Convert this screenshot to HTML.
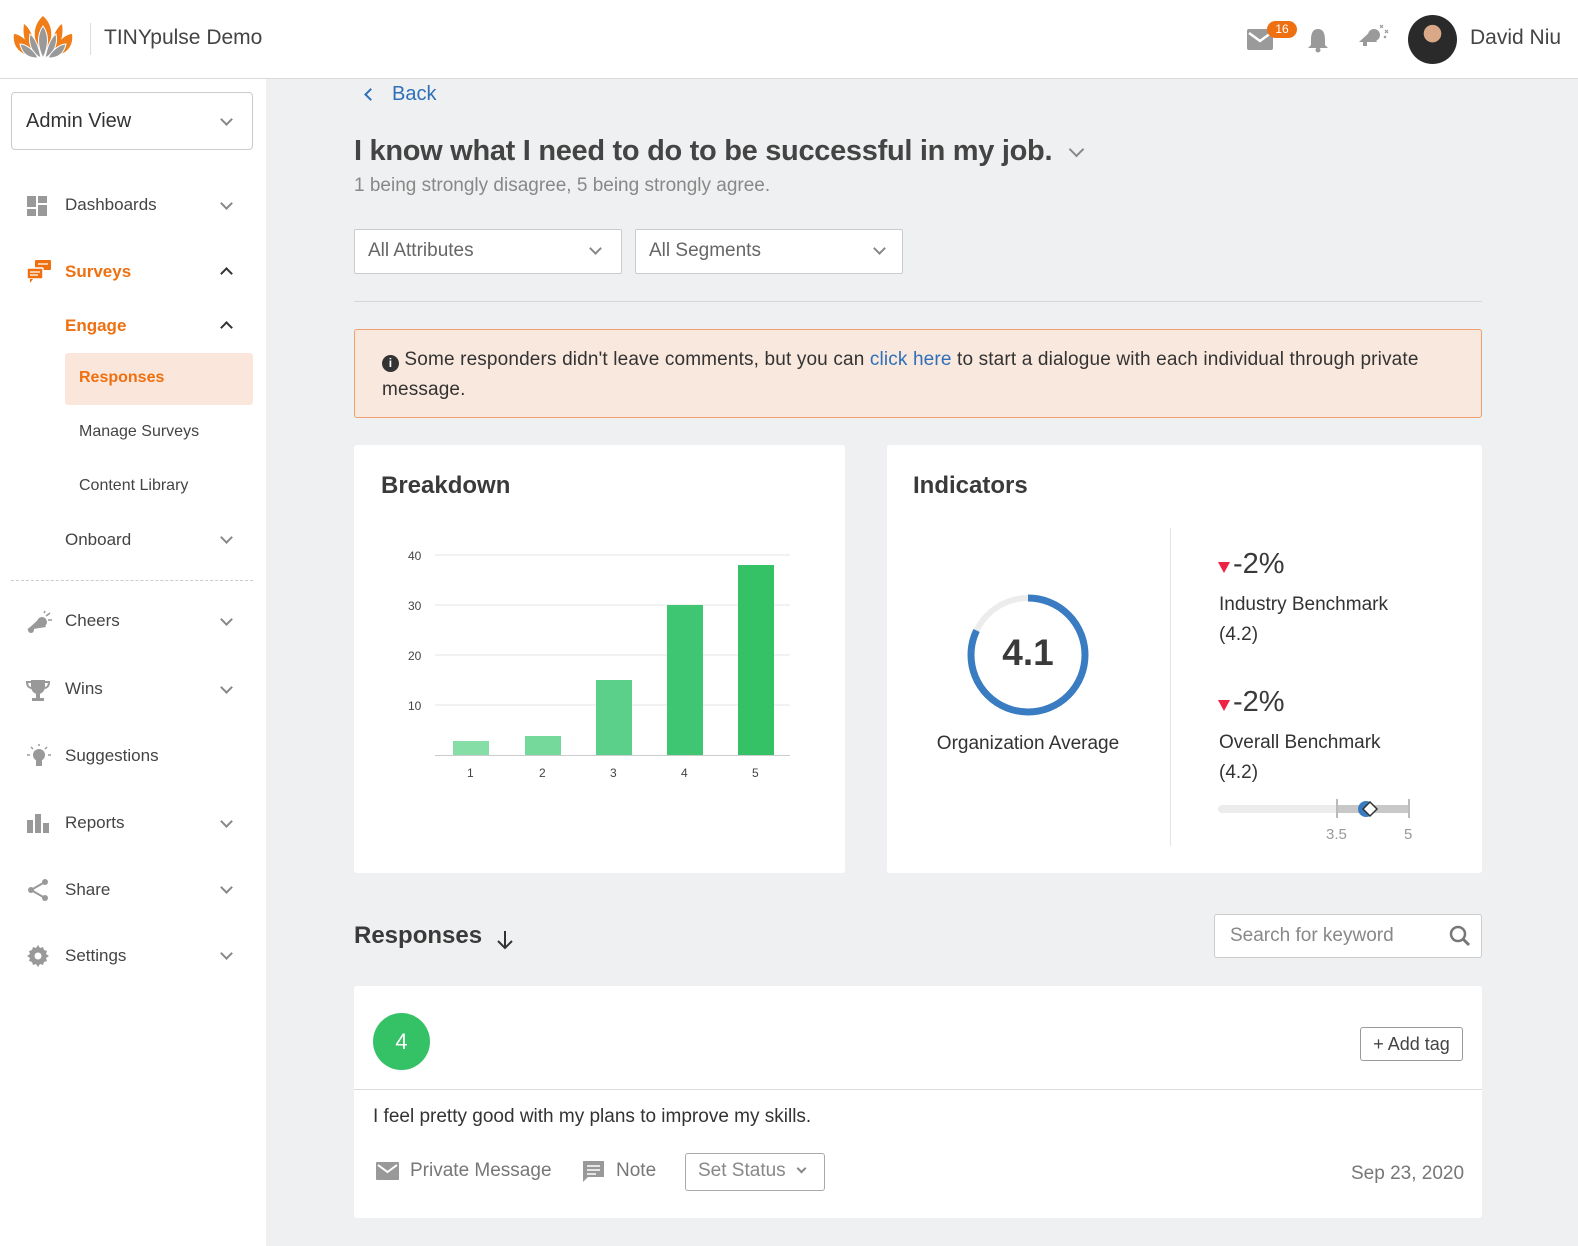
<!DOCTYPE html>
<html><head><meta charset="utf-8"><style>
*{box-sizing:border-box;margin:0;padding:0}
body{width:1578px;height:1246px;overflow:hidden;background:#eff0f1;font-family:"Liberation Sans",sans-serif;color:#3f3f3f;position:relative}
.a{position:absolute}
.hdr{left:0;top:0;width:1578px;height:79px;background:#fff;border-bottom:1px solid #d9d9d9}
.side{left:0;top:79px;width:266px;height:1167px;background:#fff}
.nav{position:absolute;left:65px;font-size:17px;color:#444}
.chev{position:absolute;width:9px;height:9px;border-right:2px solid #888;border-bottom:2px solid #888;transform:rotate(45deg)}
.chev.up{transform:rotate(-135deg);border-color:#333}
.card{background:#fff;border-radius:3px;position:absolute}
.ic{position:absolute;left:26px}
.sel{position:absolute;background:#fff;border:1px solid #ccc;border-radius:2px;font-size:19px;color:#666;padding:10px 13px}
</style></head><body>
<div class="a hdr">
 <svg class="a" style="left:10px;top:14px" width="66" height="46" viewBox="0 0 66 46">
  <path d="M33 2 C22 12 22 26 33 42 C44 26 44 12 33 2Z" fill="#f07d18"/>
  <path d="M4 20 C10 20 20 28 26 42 C12 42 2 34 4 20Z" fill="#f07d18"/>
  <path d="M62 20 C56 20 46 28 40 42 C54 42 64 34 62 20Z" fill="#f07d18"/>
  <path d="M14 10 C20 14 24 24 28 42 C16 36 12 22 14 10Z" fill="#f07d18"/>
  <path d="M52 10 C46 14 42 24 38 42 C50 36 54 22 52 10Z" fill="#f07d18"/>
  <path d="M33 12 C27 20 27 32 33 44 C39 32 39 20 33 12Z" fill="#999" stroke="#fff" stroke-width="1"/>
  <path d="M20 20 C26 24 29 34 31 44 C22 40 18 30 20 20Z" fill="#999" stroke="#fff" stroke-width="1"/>
  <path d="M46 20 C40 24 37 34 35 44 C44 40 48 30 46 20Z" fill="#999" stroke="#fff" stroke-width="1"/>
  <path d="M10 30 C16 30 24 36 28 44 C18 44 12 40 10 30Z" fill="#999" stroke="#fff" stroke-width="1"/>
  <path d="M56 30 C50 30 42 36 38 44 C48 44 54 40 56 30Z" fill="#999" stroke="#fff" stroke-width="1"/>
 </svg>
 <div class="a" style="left:90px;top:23px;width:1px;height:32px;background:#ddd"></div>
 <div class="a" style="left:104px;top:26px;font-size:21px;color:#444">TINYpulse Demo</div>
 <svg class="a" style="left:1247px;top:29px" width="28" height="22" viewBox="0 0 28 22"><rect x="0" y="0" width="26" height="21" rx="2" fill="#9a9a9a"/><path d="M2 4 L13 12 L24 4" stroke="#fff" stroke-width="2.5" fill="none"/></svg>
 <div class="a" style="left:1267px;top:21px;width:30px;height:17px;border-radius:9px;background:#ee7010;color:#fff;font-size:12px;text-align:center;line-height:17px">16</div>
 <svg class="a" style="left:1307px;top:27px" width="22" height="26" viewBox="0 0 22 26"><path d="M11 2 C5 2 4 8 4 13 L4 18 L1 21 L21 21 L18 18 L18 13 C18 8 17 2 11 2Z" fill="#9a9a9a"/><circle cx="11" cy="23" r="2.5" fill="#9a9a9a"/></svg>
 <svg class="a" style="left:1357px;top:22px" width="34" height="26" viewBox="0 0 34 26"><path d="M2 20 L14 9 L20 20 Z" fill="#9a9a9a"/><circle cx="17" cy="13" r="6" fill="#9a9a9a"/><rect x="6" y="19" width="4" height="5" fill="#9a9a9a"/><path d="M23 3l3 3M26 3l-3 3M28 8l3 3M31 8l-3 3M27 14l2 2M29 14l-2 2" stroke="#9a9a9a" stroke-width="1.2"/></svg>
 <div class="a" style="left:1408px;top:15px;width:49px;height:49px;border-radius:50%;background:radial-gradient(circle at 50% 38%,#d9a987 0 22%,#2a2a2a 23% 100%)"></div>
 <div class="a" style="left:1470px;top:26px;font-size:21px;color:#444">David Niu</div>
</div>
<div class="a side">
 <div class="a" style="left:11px;top:13px;width:242px;height:58px;border:1px solid #ccc;border-radius:4px"></div>
 <div class="a" style="left:26px;top:31px;font-size:20px;color:#333">Admin View</div>
 <div class="chev" style="left:222px;top:36px"></div>
</div>
<svg class="ic" style="top:195px" width="22" height="22"><rect x="1" y="1" width="9" height="11" fill="#999"/><rect x="12" y="1" width="9" height="7" fill="#999"/><rect x="1" y="14" width="9" height="7" fill="#999"/><rect x="12" y="10" width="9" height="11" fill="#999"/></svg>
<div class="nav" style="top:195px">Dashboards</div><div class="chev" style="left:222px;top:199px"></div>
<svg class="ic" style="top:259px" width="26" height="25"><rect x="9" y="1" width="16" height="10" rx="1" fill="#ee7010"/><rect x="1" y="9" width="16" height="11" rx="1" fill="#ee7010" stroke="#fff" stroke-width="1.5"/><path d="M4 20v4l3-4z" fill="#ee7010"/><path d="M4 13h10M4 16h8M12 5h10" stroke="#fff" stroke-width="1.3"/></svg>
<div class="nav" style="top:262px;color:#ee7010;font-weight:bold">Surveys</div><div class="chev up" style="left:222px;top:269px"></div>
<div class="nav" style="top:316px;color:#ee7010;font-weight:bold">Engage</div><div class="chev up" style="left:222px;top:323px"></div>
<div class="a" style="left:65px;top:353px;width:188px;height:52px;background:#fbe6db;border-radius:3px"></div>
<div class="nav" style="left:79px;top:369px;color:#ee7010;font-weight:bold;font-size:16px">Responses</div>
<div class="nav" style="left:79px;top:423px;font-size:16px">Manage Surveys</div>
<div class="nav" style="left:79px;top:477px;font-size:16px">Content Library</div>
<div class="nav" style="top:530px">Onboard</div><div class="chev" style="left:222px;top:533px"></div>
<div class="a" style="left:11px;top:580px;width:242px;border-top:1px dashed #ccc"></div>
<svg class="ic" style="top:610px" width="26" height="24"><path d="M1 20 L14 8 L20 17 Z" fill="#999"/><circle cx="16" cy="12" r="5" fill="#999"/><circle cx="5" cy="20" r="3" fill="#999"/><path d="M20 6l4-3M22 10l4 0M18 3l1-2" stroke="#999" stroke-width="1.5"/></svg>
<div class="nav" style="top:611px">Cheers</div><div class="chev" style="left:222px;top:615px"></div>
<svg class="ic" style="top:678px" width="24" height="24"><path d="M5 2h14v6c0 5-3 8-7 8s-7-3-7-8z" fill="#999"/><path d="M5 4H1c0 4 2 6 5 6M19 4h4c0 4-2 6-5 6" stroke="#999" stroke-width="2" fill="none"/><rect x="10" y="15" width="4" height="5" fill="#999"/><rect x="6" y="20" width="12" height="3" fill="#999"/></svg>
<div class="nav" style="top:679px">Wins</div><div class="chev" style="left:222px;top:683px"></div>
<svg class="ic" style="top:744px" width="26" height="26"><circle cx="13" cy="11" r="6" fill="#999"/><rect x="10" y="15" width="6" height="7" fill="#999"/><path d="M1 11h3M22 11h3M5 3l2 2M21 3l-2 2M13 0v2" stroke="#999" stroke-width="1.5"/></svg>
<div class="nav" style="top:746px">Suggestions</div>
<svg class="ic" style="top:812px" width="24" height="22"><rect x="1" y="8" width="6" height="13" fill="#999"/><rect x="9" y="2" width="6" height="19" fill="#999"/><rect x="17" y="11" width="6" height="10" fill="#999"/></svg>
<div class="nav" style="top:813px">Reports</div><div class="chev" style="left:222px;top:817px"></div>
<svg class="ic" style="top:878px" width="24" height="24"><circle cx="19" cy="4" r="3" fill="#999"/><circle cx="5" cy="12" r="3" fill="#999"/><circle cx="19" cy="20" r="3" fill="#999"/><path d="M19 4L5 12L19 20" stroke="#999" stroke-width="2" fill="none"/></svg>
<div class="nav" style="top:880px">Share</div><div class="chev" style="left:222px;top:883px"></div>
<svg class="ic" style="top:944px" width="24" height="24" viewBox="0 0 24 24"><path d="M12 1l2 3 3-1 1 3 3 1-1 3 3 2-3 2 1 3-3 1-1 3-3-1-2 3-2-3-3 1-1-3-3-1 1-3-3-2 3-2-1-3 3-1 1-3 3 1z" fill="#999"/><circle cx="12" cy="12" r="3.5" fill="#fff"/></svg>
<div class="nav" style="top:946px">Settings</div><div class="chev" style="left:222px;top:949px"></div>

<div class="a" style="left:366px;top:90px;width:9px;height:9px;border-left:2px solid #2f6fb8;border-bottom:2px solid #2f6fb8;transform:rotate(45deg)"></div>
<div class="a" style="left:392px;top:83px;font-size:20px;color:#2f6fb8">Back</div>
<div class="a" style="left:354px;top:135px;font-size:29px;font-weight:bold;color:#444;letter-spacing:-0.3px">I know what I need to do to be successful in my job.</div>
<div class="chev" style="left:1071px;top:144px;width:11px;height:11px"></div>
<div class="a" style="left:354px;top:175px;font-size:19px;color:#888">1 being strongly disagree, 5 being strongly agree.</div>
<div class="sel" style="left:354px;top:229px;width:268px;height:45px">All Attributes</div><div class="chev" style="left:591px;top:244px"></div>
<div class="sel" style="left:635px;top:229px;width:268px;height:45px">All Segments</div><div class="chev" style="left:875px;top:244px"></div>
<div class="a" style="left:354px;top:301px;width:1128px;border-top:1px solid #d8d8d8"></div>
<div class="a" style="left:354px;top:329px;width:1128px;height:89px;background:#f9e8de;border:1px solid #f0a070;border-radius:3px;padding:15px 27px;font-size:19px;line-height:30px;color:#333;letter-spacing:0.15px">
<span style="display:inline-block;width:17px;height:17px;border-radius:50%;background:#333;color:#fff;font-size:12px;text-align:center;line-height:17px;font-weight:bold;vertical-align:-2px">i</span> Some responders didn't leave comments, but you can <span style="color:#2f6fb8">click here</span> to start a dialogue with each individual through private message.</div>

<div class="card" style="left:354px;top:445px;width:491px;height:428px"></div>
<div class="a" style="left:381px;top:472px;font-size:24px;font-weight:bold;color:#3a3a3a">Breakdown</div>
<svg class="a" style="left:390px;top:540px" width="410" height="250" font-family="Liberation Sans" font-size="12" fill="#444">
 <g stroke="#e6e6e6"><line x1="45" y1="15" x2="400" y2="15"/><line x1="45" y1="65" x2="400" y2="65"/><line x1="45" y1="115" x2="400" y2="115"/><line x1="45" y1="165" x2="400" y2="165"/></g>
 <line x1="45" y1="215.5" x2="400" y2="215.5" stroke="#ccc"/>
 <text x="18" y="20">40</text><text x="18" y="70">30</text><text x="18" y="120">20</text><text x="18" y="170">10</text>
 <rect x="63" y="201" width="36" height="14" fill="#86dea7"/>
 <rect x="135" y="196" width="36" height="19" fill="#74d99a"/>
 <rect x="206" y="140" width="36" height="75" fill="#5bd08b"/>
 <rect x="277" y="65" width="36" height="150" fill="#3fc673"/>
 <rect x="348" y="25" width="36" height="190" fill="#35c267"/>
 <text x="77" y="237">1</text><text x="149" y="237">2</text><text x="220" y="237">3</text><text x="291" y="237">4</text><text x="362" y="237">5</text>
</svg>

<div class="card" style="left:887px;top:445px;width:595px;height:428px"></div>
<div class="a" style="left:913px;top:472px;font-size:24px;font-weight:bold;color:#3a3a3a">Indicators</div>
<svg class="a" style="left:963px;top:590px" width="130" height="130">
 <circle cx="65" cy="65" r="57" fill="none" stroke="#ececec" stroke-width="6"/>
 <circle cx="65" cy="65" r="57" fill="none" stroke="#3a7cc2" stroke-width="7" stroke-dasharray="293.7 358.1" transform="rotate(-90 65 65)"/>
</svg>
<div class="a" style="left:963px;top:632px;width:130px;text-align:center;font-size:37px;font-weight:bold;color:#3a3a3a">4.1</div>
<div class="a" style="left:918px;top:733px;width:220px;text-align:center;font-size:19px;color:#333">Organization Average</div>
<div class="a" style="left:1170px;top:528px;height:318px;border-left:1px solid #e3e3e3"></div>
<svg class="a" style="left:1218px;top:562px" width="12" height="11"><path d="M0 0h12L6 11z" fill="#ee2244"/></svg>
<div class="a" style="left:1233px;top:548px;font-size:29px;color:#3a3a3a">-2%</div>
<div class="a" style="left:1219px;top:590px;font-size:19px;line-height:30px;color:#333">Industry Benchmark<br>(4.2)</div>
<svg class="a" style="left:1218px;top:700px" width="12" height="11"><path d="M0 0h12L6 11z" fill="#ee2244"/></svg>
<div class="a" style="left:1233px;top:686px;font-size:29px;color:#3a3a3a">-2%</div>
<div class="a" style="left:1219px;top:728px;font-size:19px;line-height:30px;color:#333">Overall Benchmark<br>(4.2)</div>
<svg class="a" style="left:1216px;top:796px" width="200" height="50" font-family="Liberation Sans" font-size="15" fill="#999">
 <rect x="2" y="9" width="192" height="8" rx="4" fill="#ececec"/>
 <rect x="120" y="9" width="74" height="8" fill="#c8c8c8"/>
 <line x1="121" y1="3" x2="121" y2="22" stroke="#bbb" stroke-width="2"/><line x1="193" y1="3" x2="193" y2="22" stroke="#bbb" stroke-width="2"/>
 <circle cx="150" cy="13" r="8" fill="#3a7cc2"/>
 <path d="M154 6l7 7-7 7-7-7z" fill="#fff" stroke="#333" stroke-width="1.5"/>
 <text x="110" y="43">3.5</text><text x="188" y="43">5</text>
</svg>

<div class="a" style="left:354px;top:922px;font-size:24px;font-weight:bold;color:#3a3a3a">Responses</div>
<svg class="a" style="left:496px;top:930px" width="18" height="20"><path d="M9 1v16M2 11l7 7 7-7" stroke="#333" stroke-width="2" fill="none"/></svg>
<div class="a" style="left:1214px;top:914px;width:268px;height:44px;background:#fff;border:1px solid #ccc;border-radius:3px;padding:10px 15px;font-size:19px;color:#888">Search for keyword</div>
<svg class="a" style="left:1449px;top:925px" width="22" height="22"><circle cx="9" cy="9" r="7" stroke="#777" stroke-width="2.5" fill="none"/><path d="M14 14l6 6" stroke="#777" stroke-width="3"/></svg>

<div class="card" style="left:354px;top:986px;width:1128px;height:232px"></div>
<div class="a" style="left:373px;top:1013px;width:57px;height:57px;border-radius:50%;background:#35c267;color:#fff;font-size:22px;text-align:center;line-height:57px">4</div>
<div class="a" style="left:1360px;top:1027px;width:103px;height:34px;border:1px solid #999;border-radius:3px;font-size:18px;color:#444;text-align:center;line-height:32px">+ Add tag</div>
<div class="a" style="left:354px;top:1089px;width:1128px;border-top:1px solid #ddd"></div>
<div class="a" style="left:373px;top:1106px;font-size:19px;color:#333">I feel pretty good with my plans to improve my skills.</div>
<svg class="a" style="left:376px;top:1162px" width="24" height="19"><rect width="23" height="18" rx="1" fill="#999"/><path d="M2 3l9.5 7L21 3" stroke="#fff" stroke-width="2" fill="none"/></svg>
<div class="a" style="left:410px;top:1160px;font-size:19px;color:#777">Private Message</div>
<svg class="a" style="left:582px;top:1160px" width="23" height="23"><path d="M1 1h21v16H6l-5 5z" fill="#999"/><path d="M5 6h13M5 10h13M5 14h9" stroke="#fff" stroke-width="1.5"/></svg>
<div class="a" style="left:616px;top:1160px;font-size:19px;color:#777">Note</div>
<div class="a" style="left:685px;top:1153px;width:140px;height:38px;border:1px solid #aaa;border-radius:3px;font-size:19px;color:#888;padding:6px 12px">Set Status</div>
<div class="chev" style="left:798px;top:1165px;width:7px;height:7px"></div>
<div class="a" style="left:1351px;top:1163px;font-size:19px;color:#777">Sep 23, 2020</div>
</body></html>
